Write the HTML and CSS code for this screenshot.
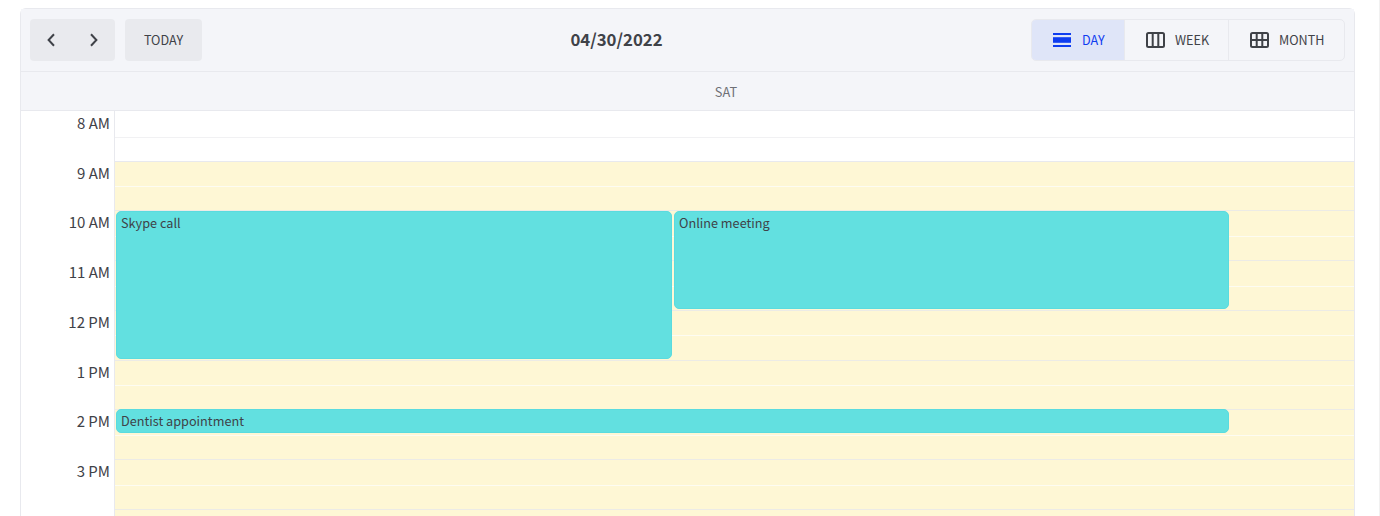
FILE: index.html
```html
<!DOCTYPE html>
<html lang="en">
<head>
    <meta charset="UTF-8">
    <meta name="viewport" content="width=device-width, initial-scale=1.0">
    <title>Scheduler</title>
    <link rel="stylesheet" href="styles.css">
</head>
<body>
    <div class="scheduler">
        <div class="toolbar">
            <div class="toolbar-left">
                <div class="nav-group">
                    <button class="nav-button" aria-label="Previous">
                        <svg width="10" height="14" viewBox="0 0 10 14"><path d="M8 1.2 2.6 7 8 12.8" /></svg>
                    </button>
                    <button class="nav-button" aria-label="Next">
                        <svg width="10" height="14" viewBox="0 0 10 14"><path d="M2 1.2 7.4 7 2 12.8" /></svg>
                    </button>
                </div>
                <button class="today-button">TODAY</button>
            </div>
            <div class="current-date">04/30/2022</div>
            <div class="view-switch">
                <button class="view-button active">
                    <svg width="18" height="14" viewBox="0 0 18 14">
                        <path d="M0 1h18M0 13h18" stroke-width="1.8" />
                        <path d="M0 7h18" stroke-width="5.6" />
                    </svg>
                    DAY
                </button>
                <button class="view-button">
                    <svg width="19" height="16" viewBox="0 0 19 16">
                        <rect x="1" y="1" width="17" height="14" rx="1.5" />
                        <path d="M6.7 1v14M12.3 1v14" />
                    </svg>
                    WEEK
                </button>
                <button class="view-button">
                    <svg width="19" height="16" viewBox="0 0 19 16">
                        <rect x="1" y="1" width="17" height="14" rx="1.5" />
                        <path d="M6.7 1v14M12.3 1v14M1 8h17" />
                    </svg>
                    MONTH
                </button>
            </div>
        </div>
        <div class="day-header">SAT</div>
        <div class="timetable">
            <div class="times">
                <div class="time">8 AM</div>
                <div class="time">9 AM</div>
                <div class="time">10 AM</div>
                <div class="time">11 AM</div>
                <div class="time">12 PM</div>
                <div class="time">1 PM</div>
                <div class="time">2 PM</div>
                <div class="time">3 PM</div>
                <div class="time">4 PM</div>
            </div>
            <div class="day-column">
                <div class="hour"><div class="half"></div></div>
                <div class="hour work"><div class="half"></div></div>
                <div class="hour work"><div class="half"></div></div>
                <div class="hour work"><div class="half"></div></div>
                <div class="hour work"><div class="half"></div></div>
                <div class="hour work"><div class="half"></div></div>
                <div class="hour work"><div class="half"></div></div>
                <div class="hour work"><div class="half"></div></div>
                <div class="hour work"><div class="half"></div></div>
                <div class="event event-skype">Skype call</div>
                <div class="event event-online">Online meeting</div>
                <div class="event event-dentist">Dentist appointment</div>
            </div>
        </div>
    </div>
</body>
</html>
```

FILE: styles.css
```css
:root {
    --border: #e8e9ee;
    --panel: #f4f5f9;
    --text: #3f4248;
    --blue: #0f3df0;
}

* {
    box-sizing: border-box;
    margin: 0;
    padding: 0;
    font-family: 'Noto Sans CJK JP', 'Noto Sans', sans-serif;
}

html, body {
    height: 516px;
    overflow: hidden;
}

body {
    background-color: white;
    color: var(--text);
    padding: 8px 0 0 20px;
    border-right: 1px solid #f1f1f1;
}

button {
    border: none;
    background: none;
    color: inherit;
    font-size: 12.6px;
    line-height: 20px;
}

.scheduler {
    border: 1px solid var(--border);
    border-radius: 6px 6px 0 0;
    width: 1335px;
}

.toolbar {
    height: 63px;
    background-color: var(--panel);
    border-bottom: 1px solid var(--border);
    padding: 10px 9px 9px;
    display: flex;
    justify-content: space-between;
    align-items: flex-start;
}

.toolbar-left {
    display: flex;
    gap: 10px;
}

.nav-group {
    display: flex;
    width: 85px;
    height: 42px;
    background-color: #e9eaee;
    border-radius: 4px;
}

.nav-button {
    flex: 1;
    display: flex;
    align-items: center;
    justify-content: center;
}

.nav-button svg path {
    fill: none;
    stroke: var(--text);
    stroke-width: 2;
}

.today-button {
    width: 77px;
    height: 42px;
    background-color: #e9eaee;
    border-radius: 4px;
}

.current-date {
    font-size: 16.8px;
    font-weight: 700;
    line-height: 41px;
}

.view-switch {
    display: flex;
    height: 42px;
    border: 1px solid var(--border);
    border-radius: 5px;
}

.view-button {
    display: flex;
    align-items: center;
    gap: 10px;
    width: 104px;
    padding-left: 21px;
    border-left: 1px solid var(--border);
}

.view-button:last-child {
    width: 116px;
}

.view-button svg {
    fill: none;
    stroke: var(--text);
    stroke-width: 2;
}

.view-button.active {
    width: 92px;
    gap: 11px;
    border-left: none;
    background-color: #dfe5f8;
    color: var(--blue);
    border-radius: 4px 0 0 4px;
}

.view-button.active svg {
    stroke: var(--blue);
}

.day-header {
    height: 39px;
    background-color: var(--panel);
    border-bottom: 1px solid var(--border);
    padding-left: 77px;
    text-align: center;
    font-size: 12.8px;
    line-height: 39px;
    color: #6e7076;
}

.timetable {
    display: flex;
}

.times {
    width: 93px;
    flex: none;
}

.time {
    height: 49.72px;
    text-align: right;
    padding-right: 4px;
    font-size: 15px;
    line-height: 23px;
}

.day-column {
    flex: 1;
    position: relative;
    padding-top: 1px;
    border-left: 1px solid var(--border);
}

.hour {
    height: 49.72px;
    border-bottom: 1px solid var(--border);
}

.half {
    height: 25.5px;
    border-bottom: 1px solid #f1f1f3;
}

.work {
    background-color: #fef7d5;
    border-bottom-color: #ecebe6;
}

.work .half {
    border-bottom-color: #fdfcf2;
}

.event {
    position: absolute;
    left: 1px;
    background-color: #62e0e0;
    border: 1px solid #5adbdf;
    border-radius: 5px;
    padding: 0 4px;
    font-size: 12.7px;
    line-height: 21px;
}

.event-skype {
    top: 100px;
    width: 556px;
    height: 148px;
}

.event-online {
    top: 100px;
    left: 559px;
    width: 555px;
    height: 98px;
}

.event-dentist {
    top: 298px;
    width: 1113px;
    height: 24px;
}
```
